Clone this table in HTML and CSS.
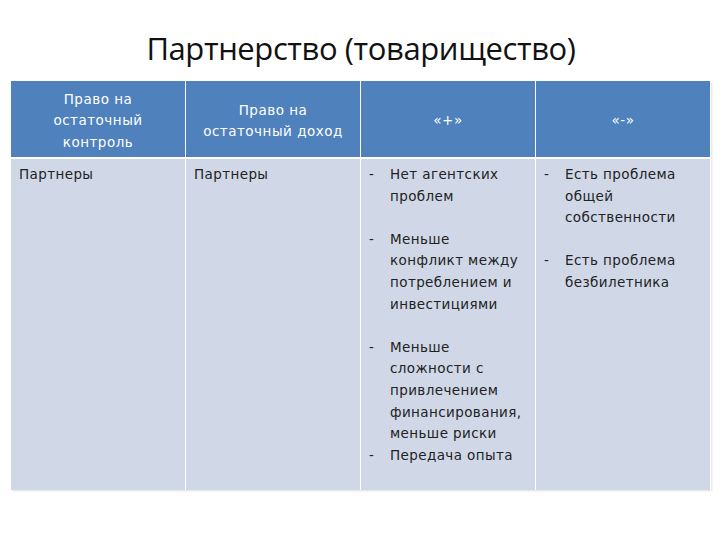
FILE: index.html
```html
<!DOCTYPE html>
<html lang="ru">
<head>
<meta charset="utf-8">
<link rel="stylesheet" href="styles.css">
</head>
<body>
<div class="slide">
  <h1 class="title">Партнерство (товарищество)</h1>
  <div class="table">
    <div class="cell head"><span>Право на<br>остаточный<br>контроль</span></div>
    <div class="cell head"><span>Право на<br>остаточный доход</span></div>
    <div class="cell head"><span>«+»</span></div>
    <div class="cell head"><span>«-»</span></div>
    <div class="cell body">Партнеры</div>
    <div class="cell body">Партнеры</div>
    <div class="cell body">
      <ul class="list">
        <li>Нет агентских<br>проблем</li>
        <li class="blank"></li>
        <li>Меньше<br>конфликт между<br>потреблением и<br>инвестициями</li>
        <li class="blank"></li>
        <li>Меньше<br>сложности с<br>привлечением<br>финансирования,<br>меньше риски</li>
        <li>Передача опыта</li>
      </ul>
    </div>
    <div class="cell body">
      <ul class="list">
        <li>Есть проблема<br>общей<br>собственности</li>
        <li class="blank"></li>
        <li>Есть проблема<br>безбилетника</li>
      </ul>
    </div>
  </div>
</div>
</body>
</html>
```
FILE: styles.css
```css
html, body {
  margin: 0;
  padding: 0;
  background: #ffffff;
}
.slide {
  width: 720px;
  height: 540px;
  padding: 28px 9px 0 11px;
  box-sizing: border-box;
  font-family: "DejaVu Sans", "Liberation Sans", sans-serif;
}
.title {
  margin: 0 0 12px 0;
  height: 41px;
  line-height: 41px;
  text-align: center;
  font-weight: normal;
  font-size: 31px;
  color: #111111;
  font-family: "Open Sans", "Liberation Sans", sans-serif;
  letter-spacing: -0.4px;
}
.table {
  display: grid;
  grid-template-columns: 174px 174px 174px 174px;
  grid-template-rows: 76px 331px;
  column-gap: 1px;
  row-gap: 2px;
  width: 700px;
  background: #ffffff;
  box-shadow: 1px 1px 2px rgba(0,0,0,0.12);
}
.cell.head {
  background: #4f81bd;
  color: #ffffff;
  font-size: 13.5px;
  letter-spacing: 0.5px;
  line-height: 21.5px;
  display: flex;
  align-items: center;
  justify-content: center;
  text-align: center;
  padding-top: 4px;
}
.cell.body {
  background: #d0d8e8;
  color: #222222;
  font-size: 13.5px;
  letter-spacing: 0.4px;
  line-height: 21.6px;
  padding: 5px 8px;
}
.list {
  list-style: none;
  margin: 0;
  padding: 0;
}
.list li {
  position: relative;
  padding-left: 21px;
}
.list li::before {
  content: "-";
  position: absolute;
  left: 0;
  top: 0;
}
.list li.blank {
  height: 21.6px;
}
.list li.blank::before {
  content: "";
}
```
